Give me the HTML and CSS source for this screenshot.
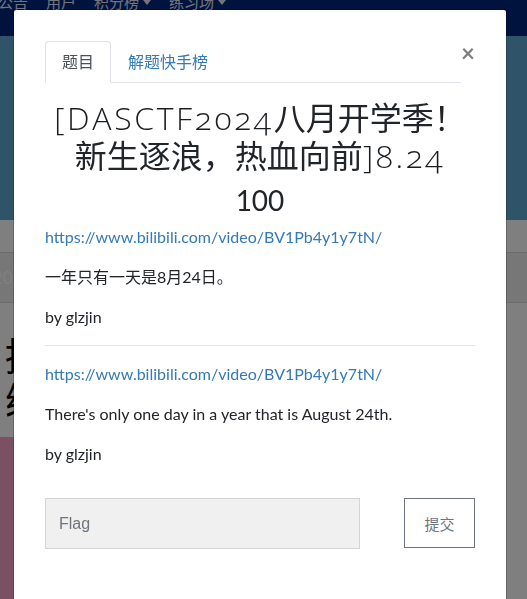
FILE: index.html
```html
<!DOCTYPE html>
<html lang="zh-CN">
<head>
<meta charset="utf-8">
<title>DASCTF 练习场</title>
<link rel="stylesheet" href="styles.css">
</head>
<body>
<div class="page">
  <nav class="navbar">
    <ul class="nav-links">
      <li>公告</li>
      <li>用户</li>
      <li>积分榜<span class="caret"></span></li>
      <li>练习场<span class="caret"></span></li>
    </ul>
  </nav>
  <header class="jumbotron"></header>
  <div class="spacer"></div>
  <div class="filter-bar"><span class="date">2024-08-24</span></div>
  <div class="content">
    <h1 class="cat-title">挑战<br>练习</h1>
  </div>
  <div class="card"></div>
</div>
<div class="backdrop"></div>
<div class="modal" role="dialog">
  <button class="close" type="button">×</button>
  <ul class="nav-tabs">
    <li><a class="tab active" href="#">题目</a></li>
    <li><a class="tab" href="#">解题快手榜</a></li>
  </ul>
  <div class="challenge">
    <h2 class="challenge-name"><span class="latin">[DASCTF2024</span>八月开学季！新生逐浪，热血向前<span class="latin">]8.24</span></h2>
    <h3 class="challenge-value">100</h3>
    <div class="challenge-desc">
      <p><a href="#">https://www.bilibili.com/video/BV1Pb4y1y7tN/</a></p>
      <p>一年只有一天是8月24日。</p>
      <p>by glzjin</p>
      <hr>
      <p><a href="#">https://www.bilibili.com/video/BV1Pb4y1y7tN/</a></p>
      <p>There's only one day in a year that is August 24th.</p>
      <p>by glzjin</p>
    </div>
    <form class="flag-form">
      <input class="flag-input" type="text" placeholder="Flag">
      <button class="submit" type="button">提交</button>
    </form>
  </div>
</div>
</body>
</html>
```
FILE: styles.css
```css
* { box-sizing: border-box; }
html, body { margin: 0; padding: 0; }
body {
  width: 527px;
  height: 599px;
  overflow: hidden;
  background: #fff;
  font-family: "Lato", "Noto Sans CJK SC", sans-serif;
  color: #212529;
}

/* page behind the dialog */
.navbar { height: 36px; background: #00247c; overflow: hidden; }
.nav-links {
  list-style: none;
  margin: -8px 0 0 -2px;
  padding: 0;
  display: flex;
  gap: 18px;
  font-family: "Noto Sans CJK SC", sans-serif;
  font-size: 15px;
  line-height: 20px;
  color: #e6ebf8;
}
.caret {
  display: inline-block;
  margin-left: 4px;
  vertical-align: 3px;
  border-top: 5px solid;
  border-left: 4px solid transparent;
  border-right: 4px solid transparent;
}
.jumbotron { height: 184px; background: #5ea8d0; }
.spacer { height: 32px; }
.filter-bar {
  height: 51px;
  background: #eeeeee;
  border-top: 1px solid #d6d6d6;
  border-bottom: 1px solid #d6d6d6;
  display: flex;
  align-items: center;
  overflow: hidden;
}
.date { margin-left: -7px; font-size: 17px; color: #ffffff; }
.content { height: 134px; padding: 28px 0 0 5px; }
.cat-title {
  margin: 0;
  font-family: "Noto Sans CJK SC", sans-serif;
  font-size: 38px;
  line-height: 45px;
  font-weight: 400;
  color: #000;
}
.card { width: 300px; height: 200px; background: #f6a0c0; }

.backdrop { position: fixed; inset: 0; background: rgba(0, 0, 0, 0.5); }

/* dialog */
.modal {
  position: fixed;
  left: 13px;
  top: 9px;
  width: 494px;
  height: 650px;
  padding: 31px;
  background: #fff;
  background-clip: padding-box;
  border: 1px solid rgba(0, 0, 0, 0.2);
  border-radius: 3px;
}
.close {
  float: right;
  margin: 0;
  padding: 0;
  background: none;
  border: 0;
  font-family: "Lato", sans-serif;
  font-size: 24px;
  font-weight: 700;
  line-height: 24px;
  color: #000;
  opacity: 0.5;
}
.nav-tabs {
  display: flex;
  list-style: none;
  margin: 0;
  padding: 0;
  border-bottom: 1px solid #dee2e6;
}
.tab {
  display: block;
  margin-bottom: -1px;
  padding: 8px 16px;
  border: 1px solid transparent;
  border-radius: 4px 4px 0 0;
  font-size: 16px;
  line-height: 24px;
  color: #337ab7;
  text-decoration: none;
}
.tab.active {
  color: #495057;
  background: #fff;
  border-color: #dee2e6 #dee2e6 #fff;
}

.challenge-name {
  margin: 0 0 8px;
  padding-top: 16px;
  font-family: "Open Sans", "Noto Sans CJK SC", sans-serif;
  font-size: 32px;
  line-height: 1.2;
  font-weight: 400;
  text-align: center;
  color: #212529;
}
.latin {
  font-weight: 300;
  color: #1a1d20;
  letter-spacing: 2.6px;
  font-variant-numeric: oldstyle-nums;
}
.challenge-value {
  margin: 0 0 8px;
  font-family: "Lato", sans-serif;
  font-size: 28px;
  line-height: 1.2;
  font-weight: 400;
  text-align: center;
  color: #212529;
}
.challenge-desc p {
  margin: 0 0 16px;
  font-size: 16px;
  line-height: 24px;
}
.challenge-desc a { color: #337ab7; text-decoration: none; }
.challenge-desc hr {
  margin: 16px 0;
  border: 0;
  border-top: 1px solid rgba(0, 0, 0, 0.1);
}

.flag-form {
  display: flex;
  justify-content: space-between;
  margin: 32px 0 0;
}
.flag-input {
  width: 315px;
  height: 51px;
  margin: 0;
  padding: 0 13px;
  background: #f0f0f0;
  border: 1px solid #d2d4d8;
  border-radius: 0;
  font-family: "Liberation Sans", Arial, sans-serif;
  font-size: 16px;
  color: #495057;
  outline: none;
}
.flag-input::placeholder { color: #6c757d; opacity: 1; }
.submit {
  width: 71px;
  height: 50px;
  margin: 0;
  padding: 0;
  background: #fff;
  border: 1px solid #6c757d;
  border-radius: 0;
  font-family: "Noto Sans CJK SC", sans-serif;
  font-size: 15px;
  color: #6c757d;
}
```
